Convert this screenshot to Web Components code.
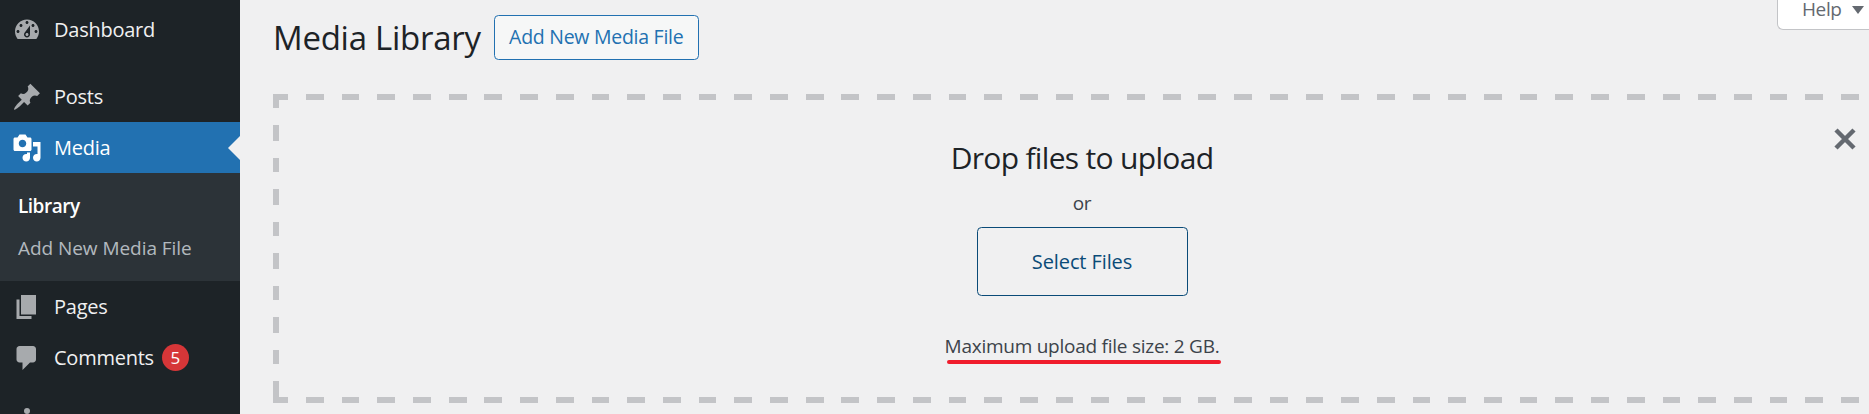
<!DOCTYPE html>
<html>
<head>
<meta charset="utf-8">
<title>Media Library</title>
<style>
  html, body { margin: 0; padding: 0; height: 100%; overflow: hidden; background: #f0f0f1; }
  body { font-family: "Open Sans", "Noto Sans", sans-serif; }
</style>
</head>
<body>
<wp-admin>
  <wp-sidebar slot="side">
    <wp-menu-item style="margin-top:4px" label="Dashboard" icon="dashboard"></wp-menu-item>
    <wp-menu-item style="margin-top:16px" label="Posts" icon="pin"></wp-menu-item>
    <wp-menu-item label="Media" icon="media" active></wp-menu-item>
    <wp-submenu>
      <wp-sub-item current>Library</wp-sub-item>
      <wp-sub-item>Add New Media File</wp-sub-item>
    </wp-submenu>
    <wp-menu-item label="Pages" icon="page"></wp-menu-item>
    <wp-menu-item label="Comments" icon="comments" badge="5"></wp-menu-item>
  </wp-sidebar>
  <wp-help-tab slot="help">Help</wp-help-tab>
  <wp-page-head slot="main" title="Media Library" action="Add New Media File"></wp-page-head>
  <wp-uploader slot="main"></wp-uploader>
</wp-admin>

<script>
const ICONS = {
    dashboard: 'M3.76 16h12.48c1.1-1.37 1.76-3.11 1.76-5 0-4.42-3.58-8-8-8s-8 3.58-8 8c0 1.89.66 3.63 1.76 5zM10 4c.55 0 1 .45 1 1s-.45 1-1 1-1-.45-1-1 .45-1 1-1zM6 6c.55 0 1 .45 1 1s-.45 1-1 1-1-.45-1-1 .45-1 1-1zm8 0c.55 0 1 .45 1 1s-.45 1-1 1-1-.45-1-1 .45-1 1-1zm-5.37 5.55L12 7v6c0 1.1-.9 2-2 2s-2-.9-2-2c0-.57.24-1.08.63-1.45zM4 10c.55 0 1 .45 1 1s-.45 1-1 1-1-.45-1-1 .45-1 1-1zm12 0c.55 0 1 .45 1 1s-.45 1-1 1-1-.45-1-1 .45-1 1-1zm-5 3c0-.55-.45-1-1-1s-1 .45-1 1 .45 1 1 1 1-.45 1-1z',
    pin: 'M10.44 3.02l1.82-1.82 6.36 6.35-1.83 1.82c-1.05-.68-2.48-.57-3.41.36l-.75.75c-.92.93-1.04 2.35-.35 3.41l-1.83 1.82-2.41-2.41-2.8 2.79c-.42.42-3.38 2.71-3.8 2.29s1.86-3.39 2.28-3.81l2.79-2.79L4.1 9.36l1.83-1.82c1.05.69 2.48.57 3.4-.36l.75-.75c.93-.92 1.05-2.35.36-3.41z',
    media: 'M13 11V4c0-.55-.45-1-1-1h-1.67L9 1H5L3.67 3H2c-.55 0-1 .45-1 1v7c0 .55.45 1 1 1h10c.55 0 1-.45 1-1zM7 4.5c1.38 0 2.5 1.12 2.5 2.5S8.38 9.5 7 9.5 4.5 8.38 4.5 7 5.62 4.5 7 4.5zM14 6h5v10.5c0 1.38-1.12 2.5-2.5 2.5S14 17.88 14 16.5s1.12-2.5 2.5-2.5c.17 0 .34.02.5.05V9h-3V6zm-4 8.05V13h2v3.5c0 1.38-1.12 2.5-2.5 2.5S7 17.88 7 16.5 8.12 14 9.5 14c.17 0 .34.02.5.05z',
    page: 'M6 15V2h10v13H6zm-1 1h8v2H3V5h2v11z',
    comments: 'M5 2h9c1.1 0 2 .9 2 2v7c0 1.1-.9 2-2 2h-2l-5 5v-5H5c-1.1 0-2-.9-2-2V4c0-1.1.9-2 2-2z'
}

class WpAdmin extends HTMLElement {
    constructor() {
        super()
        this.attachShadow({ mode: 'open' }).innerHTML = `
      <style>
        :host { display: flex; height: 414px; overflow: hidden; position: relative; background: #f0f0f1; }
        .side { flex: 0 0 240px; }
        .main { flex: 1; min-width: 0; padding-left: 33px; }
      </style>
      <div class="side"><slot name="side"></slot></div>
      <div class="main"><slot name="main"></slot></div>
      <slot name="help"></slot>
    `
    }
}

class WpSidebar extends HTMLElement {
    constructor() {
        super()
        this.attachShadow({ mode: 'open' }).innerHTML = `
      <style>
        :host { display: flex; flex-direction: column; height: 414px; overflow: hidden; background: #1d2327; }
        .peek { margin: 25px 0 0 24px; width: 6px; height: 6px; border-radius: 3px; background: #a7aaad; flex: none; }
      </style>
      <slot></slot>
      <div class="peek"></div>
    `
    }
}

class WpMenuItem extends HTMLElement {
    constructor() {
        super()
        this.attachShadow({ mode: 'open' })
    }

    connectedCallback() {
        const badge = this.getAttribute('badge')
        this.shadowRoot.innerHTML = `
      <style>
        :host {
          display: flex;
          align-items: center;
          flex: none;
          height: 51px;
          position: relative;
          color: #f0f0f1;
          font: 400 20px/30px "Open Sans", sans-serif;
          letter-spacing: -0.25px;
        }
        :host([active]) { background: #2271b1; color: #fff; }
        svg { flex: none; width: 30px; height: 30px; margin: 0 12px 0 12px; fill: #a7aaad; fill-rule: evenodd; }
        :host([active]) svg { fill: #fff; }
        span.label { margin-top: 1px; }
        .badge {
          width: 27px; height: 27px; border-radius: 50%; margin-left: 8px;
          background: #d63638; color: #fff; letter-spacing: 0;
          font-size: 17px; line-height: 27px; text-align: center;
        }
        .arrow {
          display: none;
          position: absolute; right: 0; top: 14px;
          border: 12px solid transparent; border-right-color: #f0f0f1; border-left-width: 0;
        }
        :host([active]) .arrow { display: block; }
      </style>
      <svg viewBox="0 0 20 20"><path d="${ICONS[this.getAttribute('icon')]}"/></svg>
      <span class="label">${this.getAttribute('label')}</span>
      ${badge ? `<span class="badge">${badge}</span>` : ''}
      <i class="arrow"></i>
    `
    }
}

class WpSubmenu extends HTMLElement {
    constructor() {
        super()
        this.attachShadow({ mode: 'open' }).innerHTML = `
      <style>
        :host { display: block; flex: none; height: 108px; box-sizing: border-box; padding-top: 12px; background: #2c3338; }
      </style>
      <slot></slot>
    `
    }
}

class WpSubItem extends HTMLElement {
    constructor() {
        super()
        this.attachShadow({ mode: 'open' }).innerHTML = `
      <style>
        :host {
          display: block;
          height: 42px;
          padding-left: 18px;
          color: rgba(240, 246, 252, .7);
          font: 400 19px/42px "Open Sans", sans-serif;
          letter-spacing: -0.05px;
        }
        :host([current]) { color: #fff; font-weight: 600; letter-spacing: -0.5px; }
      </style>
      <slot></slot>
    `
    }
}

class WpHelpTab extends HTMLElement {
    constructor() {
        super()
        this.attachShadow({ mode: 'open' }).innerHTML = `
      <style>
        :host {
          display: flex;
          align-items: center;
          gap: 10px;
          position: absolute;
          top: -11px;
          right: 0;
          box-sizing: border-box;
          width: 92px;
          height: 41px;
          padding-left: 24px;
          background: #fff;
          border: 1.5px solid #c3c4c7;
          border-top: 0;
          border-right: 0;
          border-radius: 0 0 0 6px;
          color: #646970;
          font: 400 19px/30px "Open Sans", sans-serif;
          letter-spacing: -0.4px;
        }
        i { border: 6px solid transparent; border-top: 8px solid #646970; border-bottom: 0; margin-top: 1px; }
      </style>
      <slot></slot><i></i>
    `
    }
}

class WpPageHead extends HTMLElement {
    constructor() {
        super()
        this.attachShadow({ mode: 'open' })
    }

    connectedCallback() {
        this.shadowRoot.innerHTML = `
      <style>
        :host { display: flex; align-items: center; gap: 13px; height: 94px; box-sizing: border-box; padding-bottom: 19px; }
        h1 { margin: 0; font: 400 33px/46px "Open Sans", sans-serif; letter-spacing: -0.27px; color: #1d2327; }
        a {
          box-sizing: border-box; width: 205px; height: 45px; text-align: center;
          border: 1.5px solid #2271b1; border-radius: 4.5px; background: #f6f7f7;
          color: #2271b1; font: 400 19.5px/42px "Open Sans", sans-serif; letter-spacing: -0.27px;
        }
      </style>
      <h1>${this.getAttribute('title')}</h1>
      <a>${this.getAttribute('action')}</a>
    `
    }
}

class WpUploader extends HTMLElement {
    constructor() {
        super()
        this.attachShadow({ mode: 'open' }).innerHTML = `
      <style>
        :host {
          display: flex;
          flex-direction: column;
          align-items: center;
          box-sizing: border-box;
          width: 1618px;
          height: 309px;
          position: relative;
          color: #3c434a;
          --d: #c3c4c7;
          background:
            repeating-linear-gradient(90deg, var(--d) 0 15px, transparent 15px 33px, var(--d) 33px 35.7px) 0 0 / 100% 6px no-repeat,
            repeating-linear-gradient(90deg, var(--d) 0 15px, transparent 15px 33px, var(--d) 33px 35.7px) 0 100% / 100% 6px no-repeat,
            repeating-linear-gradient(180deg, var(--d) 0 14px, transparent 14px 31px, var(--d) 31px 47px, transparent 47px 64px) 0 0 / 6px 295px no-repeat,
            linear-gradient(var(--d), var(--d)) 0 100% / 6px 14px no-repeat;
        }
        h2 { margin: 0; padding-top: 44px; font: 400 30px/40px "Open Sans", sans-serif; letter-spacing: -0.68px; color: #1d2327; }
        p { margin: 0; font: 400 19px/28px "Open Sans", sans-serif; letter-spacing: -0.4px; }
        .or { margin-top: 11px; }
        button {
          display: block;
          box-sizing: border-box; width: 211px; height: 69px; margin-top: 10px; padding: 0;
          border: 1.5px solid #0a4b78; border-radius: 4.5px; background: transparent;
          color: #0a4b78; font: 400 20px/28px "Open Sans", sans-serif; letter-spacing: -0.1px;
        }
        .max { margin-top: 36px; letter-spacing: -0.25px; }
        .line { width: 274px; height: 4px; margin: 0 0 0 4px; border-radius: 2px; background: #f01c2c; }
        .close { position: absolute; top: 34px; right: 35px; width: 22px; height: 22px; }
      </style>
      <h2>Drop files to upload</h2>
      <p class="or">or</p>
      <button>Select Files</button>
      <p class="max">Maximum upload file size: 2 GB.</p>
      <div class="line"></div>
      <svg class="close" viewBox="0 0 22 22"><path d="M2 2 L20 20 M20 2 L2 20" stroke="#646970" stroke-width="4.5" fill="none"/></svg>
    `
    }
}

customElements.define('wp-admin', WpAdmin)
customElements.define('wp-sidebar', WpSidebar)
customElements.define('wp-menu-item', WpMenuItem)
customElements.define('wp-submenu', WpSubmenu)
customElements.define('wp-sub-item', WpSubItem)
customElements.define('wp-help-tab', WpHelpTab)
customElements.define('wp-page-head', WpPageHead)
customElements.define('wp-uploader', WpUploader)
</script>
</body>
</html>
